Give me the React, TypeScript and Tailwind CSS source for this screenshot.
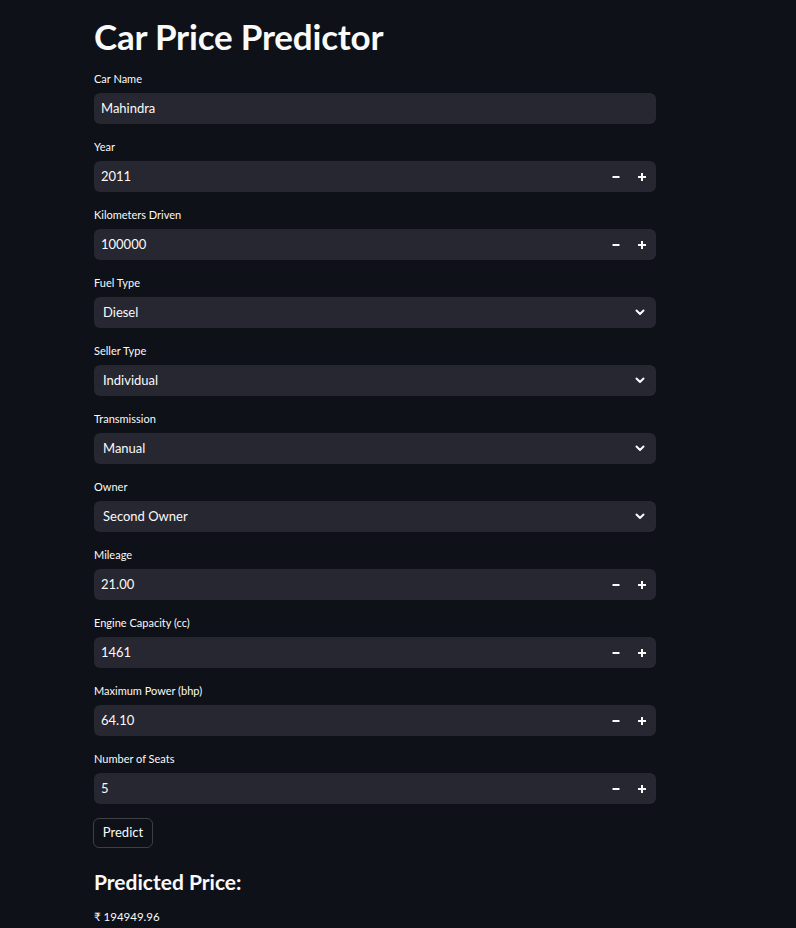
import type { ReactNode } from "react";

const font = { fontFamily: '"Lato", "Noto Sans", sans-serif' };

type Field =
  | { kind: "text"; label: string; value: string }
  | { kind: "number"; label: string; value: string }
  | { kind: "select"; label: string; value: string };

const fields: Field[] = [
  { kind: "text", label: "Car Name", value: "Mahindra" },
  { kind: "number", label: "Year", value: "2011" },
  { kind: "number", label: "Kilometers Driven", value: "100000" },
  { kind: "select", label: "Fuel Type", value: "Diesel" },
  { kind: "select", label: "Seller Type", value: "Individual" },
  { kind: "select", label: "Transmission", value: "Manual" },
  { kind: "select", label: "Owner", value: "Second Owner" },
  { kind: "number", label: "Mileage", value: "21.00" },
  { kind: "number", label: "Engine Capacity (cc)", value: "1461" },
  { kind: "number", label: "Maximum Power (bhp)", value: "64.10" },
  { kind: "number", label: "Number of Seats", value: "5" },
];

function Minus() {
  return (
    <svg width="8" height="8" viewBox="0 0 8 8">
      <path d="M0.5 4h7" stroke="#fafafa" strokeWidth="2" />
    </svg>
  );
}

function Plus() {
  return (
    <svg width="8" height="8" viewBox="0 0 8 8">
      <path d="M0 4h8M4 0v8" stroke="#fafafa" strokeWidth="2" />
    </svg>
  );
}

function Chevron() {
  return (
    <svg width="10" height="7" viewBox="0 0 10 7" fill="none">
      <path d="M1.5 1.5l3.5 3.5 3.5-3.5" stroke="#fafafa" strokeWidth="2" strokeLinecap="round" strokeLinejoin="round" />
    </svg>
  );
}

function Box({ children }: { children: ReactNode }) {
  return <div className="flex h-[31px] w-[562px] items-center rounded-md bg-[#262730] text-[13px] text-[#fafafa]">{children}</div>;
}

function FieldRow({ field }: { field: Field }) {
  return (
    <div className="flex flex-col">
      <label className="mb-[6px] h-4 text-[11px] leading-4 text-[#fafafa]">{field.label}</label>
      <Box>
        {field.kind === "select" ? (
          <>
            <span className="flex-1 pl-[9px]">{field.value}</span>
            <span className="flex w-[32px] justify-center">
              <Chevron />
            </span>
          </>
        ) : (
          <>
            <span className="flex-1 pl-[7px]">{field.value}</span>
            {field.kind === "number" && (
              <>
                <span className="flex h-full w-[26px] items-center justify-center">
                  <Minus />
                </span>
                <span className="mr-[1px] flex h-full w-[26px] items-center justify-center">
                  <Plus />
                </span>
              </>
            )}
          </>
        )}
      </Box>
    </div>
  );
}

export default function App() {
  return (
    <div className="min-h-[928px] w-full bg-[#0e1117] text-[#fafafa]" style={font}>
      <div className="flex flex-col pl-[94px] pt-[12px]">
        <h1 className="mb-[11px] h-12 text-[35px] font-bold leading-[48px] tracking-[-0.2px]">Car Price Predictor</h1>
        <div className="flex flex-col gap-[15px]">
          {fields.map((field) => (
            <FieldRow key={field.label} field={field} />
          ))}
        </div>
        <button
          type="button"
          className="mt-[14px] flex h-[30px] w-[60px] -translate-x-px items-center justify-center rounded-md border border-[#fafafa33] text-[13px] text-[#fafafa]"
        >
          Predict
        </button>
        <h3 className="mt-[20px] h-7 text-[21px] font-bold leading-7">Predicted Price:</h3>
        <p className="mt-[12px] text-[11.5px] leading-[18px]">₹ 194949.96</p>
      </div>
    </div>
  );
}
